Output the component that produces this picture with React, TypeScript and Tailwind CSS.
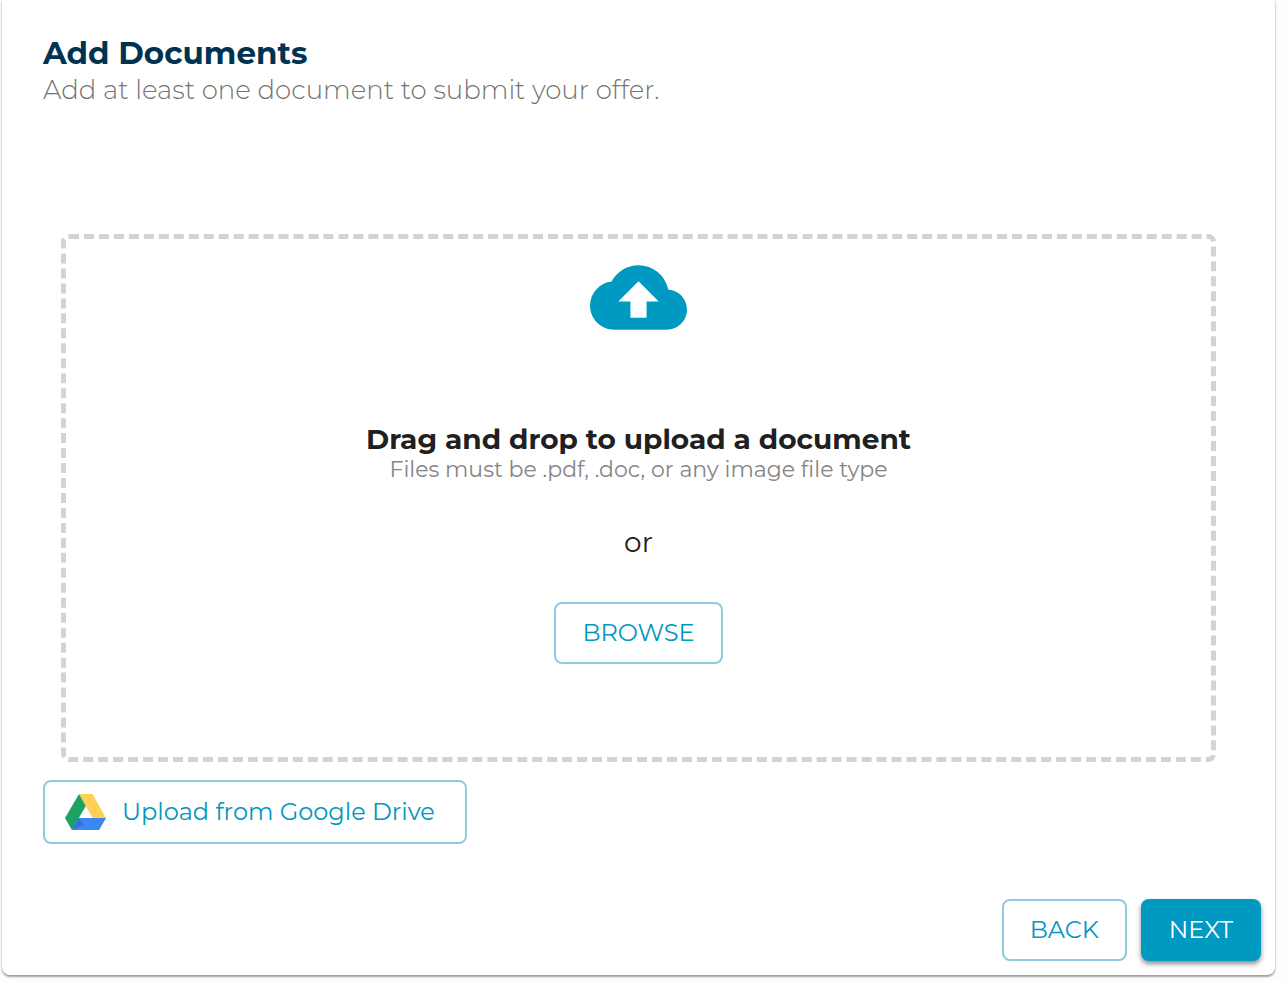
import React, { useRef, useState } from 'react';
import { MdCloudUpload } from 'react-icons/md';
import clsx from 'clsx';

const outlined = 'border-2 border-[#8ecbe0] bg-white text-[#0097c0]';

function DriveIcon() {
  return (
    <svg viewBox="0 0 41 36" className="h-9 w-[41px] shrink-0" aria-hidden="true">
      <path d="M14 0h13.5L41 24H27.5z" fill="#ffcf56" />
      <path d="M14 0l6.8 11.9L6.9 36 0 24z" fill="#1ca261" />
      <path d="M13.6 24H41l-6.8 12H6.9z" fill="#3a86f2" />
      <path d="M13.6 24l5.4 6.8L6.9 36z" fill="#2f74dc" />
    </svg>
  );
}

type ActionButtonProps = {
  label: string;
  filled?: boolean;
  onClick?: () => void;
};

function ActionButton({ label, filled, onClick }: ActionButtonProps) {
  return (
    <button
      type="button"
      onClick={onClick}
      className={clsx(
        'h-[62px] cursor-pointer rounded-lg text-2xl',
        filled ? 'bg-[#0099c2] px-7 text-white shadow-[0_3px_5px_rgba(0,0,0,0.45)]' : `px-[26px] ${outlined}`,
      )}
    >
      {label}
    </button>
  );
}

export default function App() {
  const fileInput = useRef<HTMLInputElement>(null);
  const [files, setFiles] = useState<File[]>([]);

  const addFiles = (list: FileList | null) => {
    if (!list) return;
    setFiles([...files, ...Array.from(list)]);
  };

  return (
    <div className="min-h-screen bg-[#fdfdfd] pr-3 pb-[7px] pl-0.5 font-['Montserrat','Inter',sans-serif]">
      <main className="rounded-b-lg bg-white pb-3.5 shadow-[0_2px_2px_rgba(0,0,0,0.35),0_0_3px_rgba(0,0,0,0.12)]">
        <header className="px-[41px] pt-8">
          <h1 className="text-[31px] leading-[42px] font-bold text-[#003252]">Add Documents</h1>
          <p className="text-[26px] leading-8 font-light text-[#757575]">Add at least one document to submit your offer.</p>
        </header>

        {/* drop zone */}
        <section
          className="mx-[59px] mt-32 flex h-[528px] flex-col items-center rounded-lg border-[5px] border-dashed border-[#d3d3d3] pt-2.5 text-center"
          onDragOver={(e) => e.preventDefault()}
          onDrop={(e) => {
            e.preventDefault();
            addFiles(e.dataTransfer.files);
          }}
        >
          <MdCloudUpload className="size-[97px] text-[#0099c2]" />
          <h2 className="mt-[76px] text-[28px] leading-[34px] font-bold text-[#202020]">Drag and drop to upload a document</h2>
          <p className="text-[22px] leading-7 text-[#858585]">Files must be .pdf, .doc, or any image file type</p>
          <p className="mt-[38px] mb-10 text-[28px] leading-10 text-[#202020]">or</p>
          <ActionButton label="BROWSE" onClick={() => fileInput.current?.click()} />
          <input
            ref={fileInput}
            type="file"
            multiple
            accept=".pdf,.doc,image/*"
            aria-label="Documents"
            className="hidden"
            onChange={(e) => addFiles(e.target.files)}
          />
        </section>

        <div className="mt-[18px] px-[41px]">
          <button
            type="button"
            className={clsx('flex h-16 cursor-pointer items-center gap-4 rounded-lg pr-[30px] pl-5 text-2xl', outlined)}
          >
            <DriveIcon />
            Upload from Google Drive
          </button>
        </div>

        <footer className="mt-[55px] flex justify-end gap-3.5 pr-3.5">
          <ActionButton label="BACK" />
          <ActionButton label="NEXT" filled />
        </footer>
      </main>
    </div>
  );
}
